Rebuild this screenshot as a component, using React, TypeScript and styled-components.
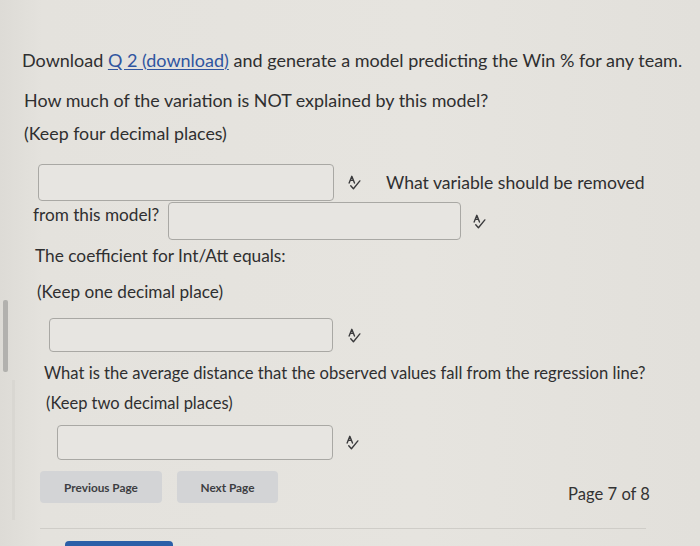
import React from "react";
import styled, { createGlobalStyle } from "styled-components";

const Global = createGlobalStyle`
  html, body { margin: 0; padding: 0; background: #e3e1dc; }
  body { width: 700px; height: 546px; overflow: hidden; font-family: Lato, "Noto Sans", sans-serif; color: #2f2f30; }
`;

const Page = styled.div`
  position: relative;
  width: 700px;
  height: 546px;
  background: linear-gradient(90deg, #dddbd6 0%, #e4e2dd 6%, #e6e4df 60%, #e2e0db 100%);
  display: flex;
  flex-direction: column;
  overflow: hidden;
`;

const Text = styled.div<{ $top: number; $left: number; $size?: number }>`
  margin-top: ${(p) => p.$top}px;
  padding-left: ${(p) => p.$left}px;
  font-size: ${(p) => p.$size ?? 16}px;
  line-height: 20px;
  height: 20px;
  white-space: nowrap;
`;

const Link = styled.a`
  color: #2f55a0;
  text-decoration: underline;
  text-underline-offset: 2px;
`;

const Row = styled.div<{ $top: number; $left: number; $gap?: number }>`
  margin-top: ${(p) => p.$top}px;
  padding-left: ${(p) => p.$left}px;
  display: flex;
  align-items: center;
  gap: ${(p) => p.$gap ?? 0}px;
  white-space: nowrap;
`;

const Input = styled.div<{ $w: number; $h: number; $ml?: number }>`
  width: ${(p) => p.$w}px;
  height: ${(p) => p.$h}px;
  margin-left: ${(p) => p.$ml ?? 0}px;
  box-sizing: border-box;
  border: 1.5px solid #a9a8a4;
  border-radius: 4px;
  background: #e7e5e1;
  flex: none;
`;

const IconWrap = styled.span<{ $ml: number }>`
  margin-left: ${(p) => p.$ml}px;
  display: inline-flex;
  width: 15px;
  height: 15px;
  color: #3a3a3c;
`;

const Label = styled.span<{ $size?: number; $ml?: number; $lift?: number }>`
  font-size: ${(p) => p.$size ?? 16}px;
  line-height: 20px;
  margin-left: ${(p) => p.$ml ?? 0}px;
  margin-bottom: ${(p) => (p.$lift ?? 0) * 2}px;
`;

const Button = styled.div<{ $w: number }>`
  width: ${(p) => p.$w}px;
  height: 32px;
  border-radius: 4px;
  background: #d3d4d6;
  display: flex;
  align-items: center;
  justify-content: center;
  font-size: 11.8px;
  font-weight: 700;
  color: #3d3e42;
  flex: none;
`;

const PageCount = styled.span`
  margin-left: auto;
  margin-right: 50px;
  margin-top: 14px;
  font-size: 16.6px;
  color: #333;
`;

const Rule = styled.div`
  margin-top: 24px;
  margin-left: 40px;
  width: 606px;
  height: 1px;
  background: #cfcdc8;
`;

const BlueBtn = styled.div`
  margin-top: 12px;
  margin-left: 65px;
  width: 108px;
  height: 10px;
  border-radius: 4px 4px 0 0;
  background: #2b5fa8;
`;

const SideBar = styled.div`
  position: absolute;
  left: 3px;
  top: 300px;
  width: 5px;
  height: 72px;
  border-radius: 2px;
  background: #b2b1ae;
`;

const SideLine = styled.div`
  position: absolute;
  left: 12px;
  top: 380px;
  width: 3px;
  height: 140px;
  background: #d9d7d2;
`;

const SpellIcon = () => (
  <svg width="15" height="15" viewBox="0 0 14 14" fill="none" stroke="currentColor" strokeWidth="1.3" strokeLinecap="round" strokeLinejoin="round">
    <path d="M2 7.5 L4.5 1.2 L7 7.5 M3 5 H6" />
    <path d="M3.5 10 L6 12.8 L12 5.5" />
  </svg>
);

export default function App() {
  return (
    <>
      <Global />
      <Page>
        <SideBar />
        <SideLine />
        <Text $top={50} $left={22} $size={18}>
          Download <Link>Q 2 (download)</Link> and generate a model predicting the Win % for any team.
        </Text>
        <Text $top={20} $left={24} $size={17.9}>
          How much of the variation is NOT explained by this model?
        </Text>
        <Text $top={13} $left={24} $size={17.8}>
          (Keep four decimal places)
        </Text>
        <Row $top={21} $left={38}>
          <Input $w={296} $h={37} />
          <IconWrap $ml={13}><SpellIcon /></IconWrap>
          <Label $size={17.6} $ml={24}>What variable should be removed</Label>
        </Row>
        <Row $top={1} $left={33}>
          <Label $size={17.2} $lift={6}>from this model?</Label>
          <Input $w={293} $h={38} $ml={9} />
          <IconWrap $ml={11}><SpellIcon /></IconWrap>
        </Row>
        <Text $top={6} $left={35} $size={17.3}>
          The coefficient for Int/Att equals:
        </Text>
        <Text $top={16} $left={37} $size={17.2}>
          (Keep one decimal place)
        </Text>
        <Row $top={16} $left={49}>
          <Input $w={284} $h={34} />
          <IconWrap $ml={14}><SpellIcon /></IconWrap>
        </Row>
        <Text $top={11} $left={44} $size={16.6}>
          What is the average distance that the observed values fall from the regression line?
        </Text>
        <Text $top={10} $left={46} $size={16.5}>
          (Keep two decimal places)
        </Text>
        <Row $top={12} $left={57}>
          <Input $w={276} $h={35} />
          <IconWrap $ml={12}><SpellIcon /></IconWrap>
        </Row>
        <Row $top={10} $left={40} $gap={15}>
          <Button $w={122}>Previous Page</Button>
          <Button $w={101}>Next Page</Button>
          <PageCount>Page 7 of 8</PageCount>
        </Row>
        <Rule />
        <BlueBtn />
      </Page>
    </>
  );
}
